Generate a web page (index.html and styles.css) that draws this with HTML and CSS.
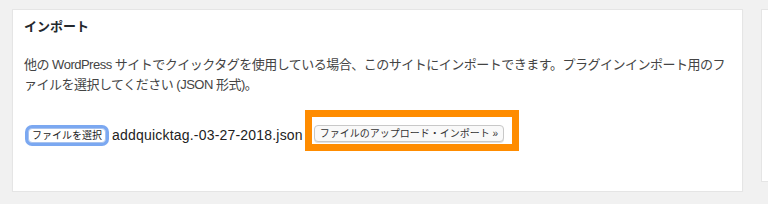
FILE: index.html
```html
<!DOCTYPE html>
<html lang="ja">
<head>
<meta charset="UTF-8" />
<meta name="viewport" content="width=device-width, initial-scale=1" />
<title>インポート</title>
<link rel="stylesheet" href="styles.css">
</head>
<body>
  <div class="wrap">
    <div class="postbox">
      <h2 class="hndle">インポート</h2>
      <div class="inside">
        <p class="desc">他の WordPress サイトでクイックタグを使用している場合、このサイトにインポートできます。プラグインインポート用のファイルを選択してください (JSON 形式)。</p>
        <div class="import-row">
          <span class="file-pick">
            <button class="file-btn" type="button">ファイルを選択</button>
            <span class="file-name">addquicktag.-03-27-2018.json</span>
          </span>
          <span class="highlight">
            <button class="button" type="button">ファイルのアップロード・インポート »</button>
          </span>
        </div>
      </div>
    </div>
    <div class="side"></div>
  </div>
</body>
</html>
```

FILE: styles.css
```css
body {
  margin: 0;
  background: #f1f1f1;
  font-family: "Liberation Sans", "Noto Sans CJK JP", sans-serif;
  color: #23282d;
  overflow: hidden;
}

.wrap {
  display: flex;
  align-items: flex-start;
  gap: 18px;
  padding: 9px 0 0 12px;
}

.postbox {
  box-sizing: border-box;
  flex-shrink: 0;
  width: 731px;
  height: 183px;
  background: #fff;
  border: 1px solid #e5e5e5;
  box-shadow: 0 1px 1px rgba(0, 0, 0, 0.04);
}

.hndle {
  margin: 0;
  padding: 8px 11px;
  font-size: 13px;
  line-height: 18px;
  font-weight: bold;
}

.inside {
  padding: 0 11px;
}

.desc {
  margin: 11px 0 0;
  font-size: 13px;
  line-height: 20px;
  letter-spacing: -0.5px;
  color: #444;
}

.import-row {
  display: flex;
  align-items: flex-start;
  margin-top: 15px;
}

.file-pick {
  display: flex;
  align-items: center;
  gap: 3px;
  margin-top: 16px;
  margin-left: 1px;
}

.file-btn {
  box-sizing: border-box;
  height: 15px;
  margin: 0 3px;
  padding: 0 3px;
  font-family: inherit;
  font-size: 10px;
  line-height: 13px;
  white-space: nowrap;
  color: #222;
  background: #fff;
  border: 1px solid #a9c3ee;
  border-radius: 4px;
  box-shadow: 0 0 0 3px #7ba8f1;
}

.file-name {
  font-size: 14px;
  line-height: 18px;
  letter-spacing: 0.2px;
  color: #222;
}

.highlight {
  display: flex;
  margin-left: 2px;
  padding: 8px 8px 2px 2px;
  border: 7px solid #ff8c00;
}

.button {
  box-sizing: border-box;
  height: 17px;
  padding: 0 5px;
  font-family: inherit;
  font-size: 10px;
  line-height: 15px;
  white-space: nowrap;
  color: #333;
  background: #f9f9f9;
  border: 1px solid #c8c8c8;
  border-radius: 4px;
  box-shadow: 0 1px 0 #e2e2e2;
}

.side {
  box-sizing: border-box;
  flex-shrink: 0;
  width: 60px;
  height: 173px;
  background: #fff;
  border: 1px solid #e5e5e5;
}
```
